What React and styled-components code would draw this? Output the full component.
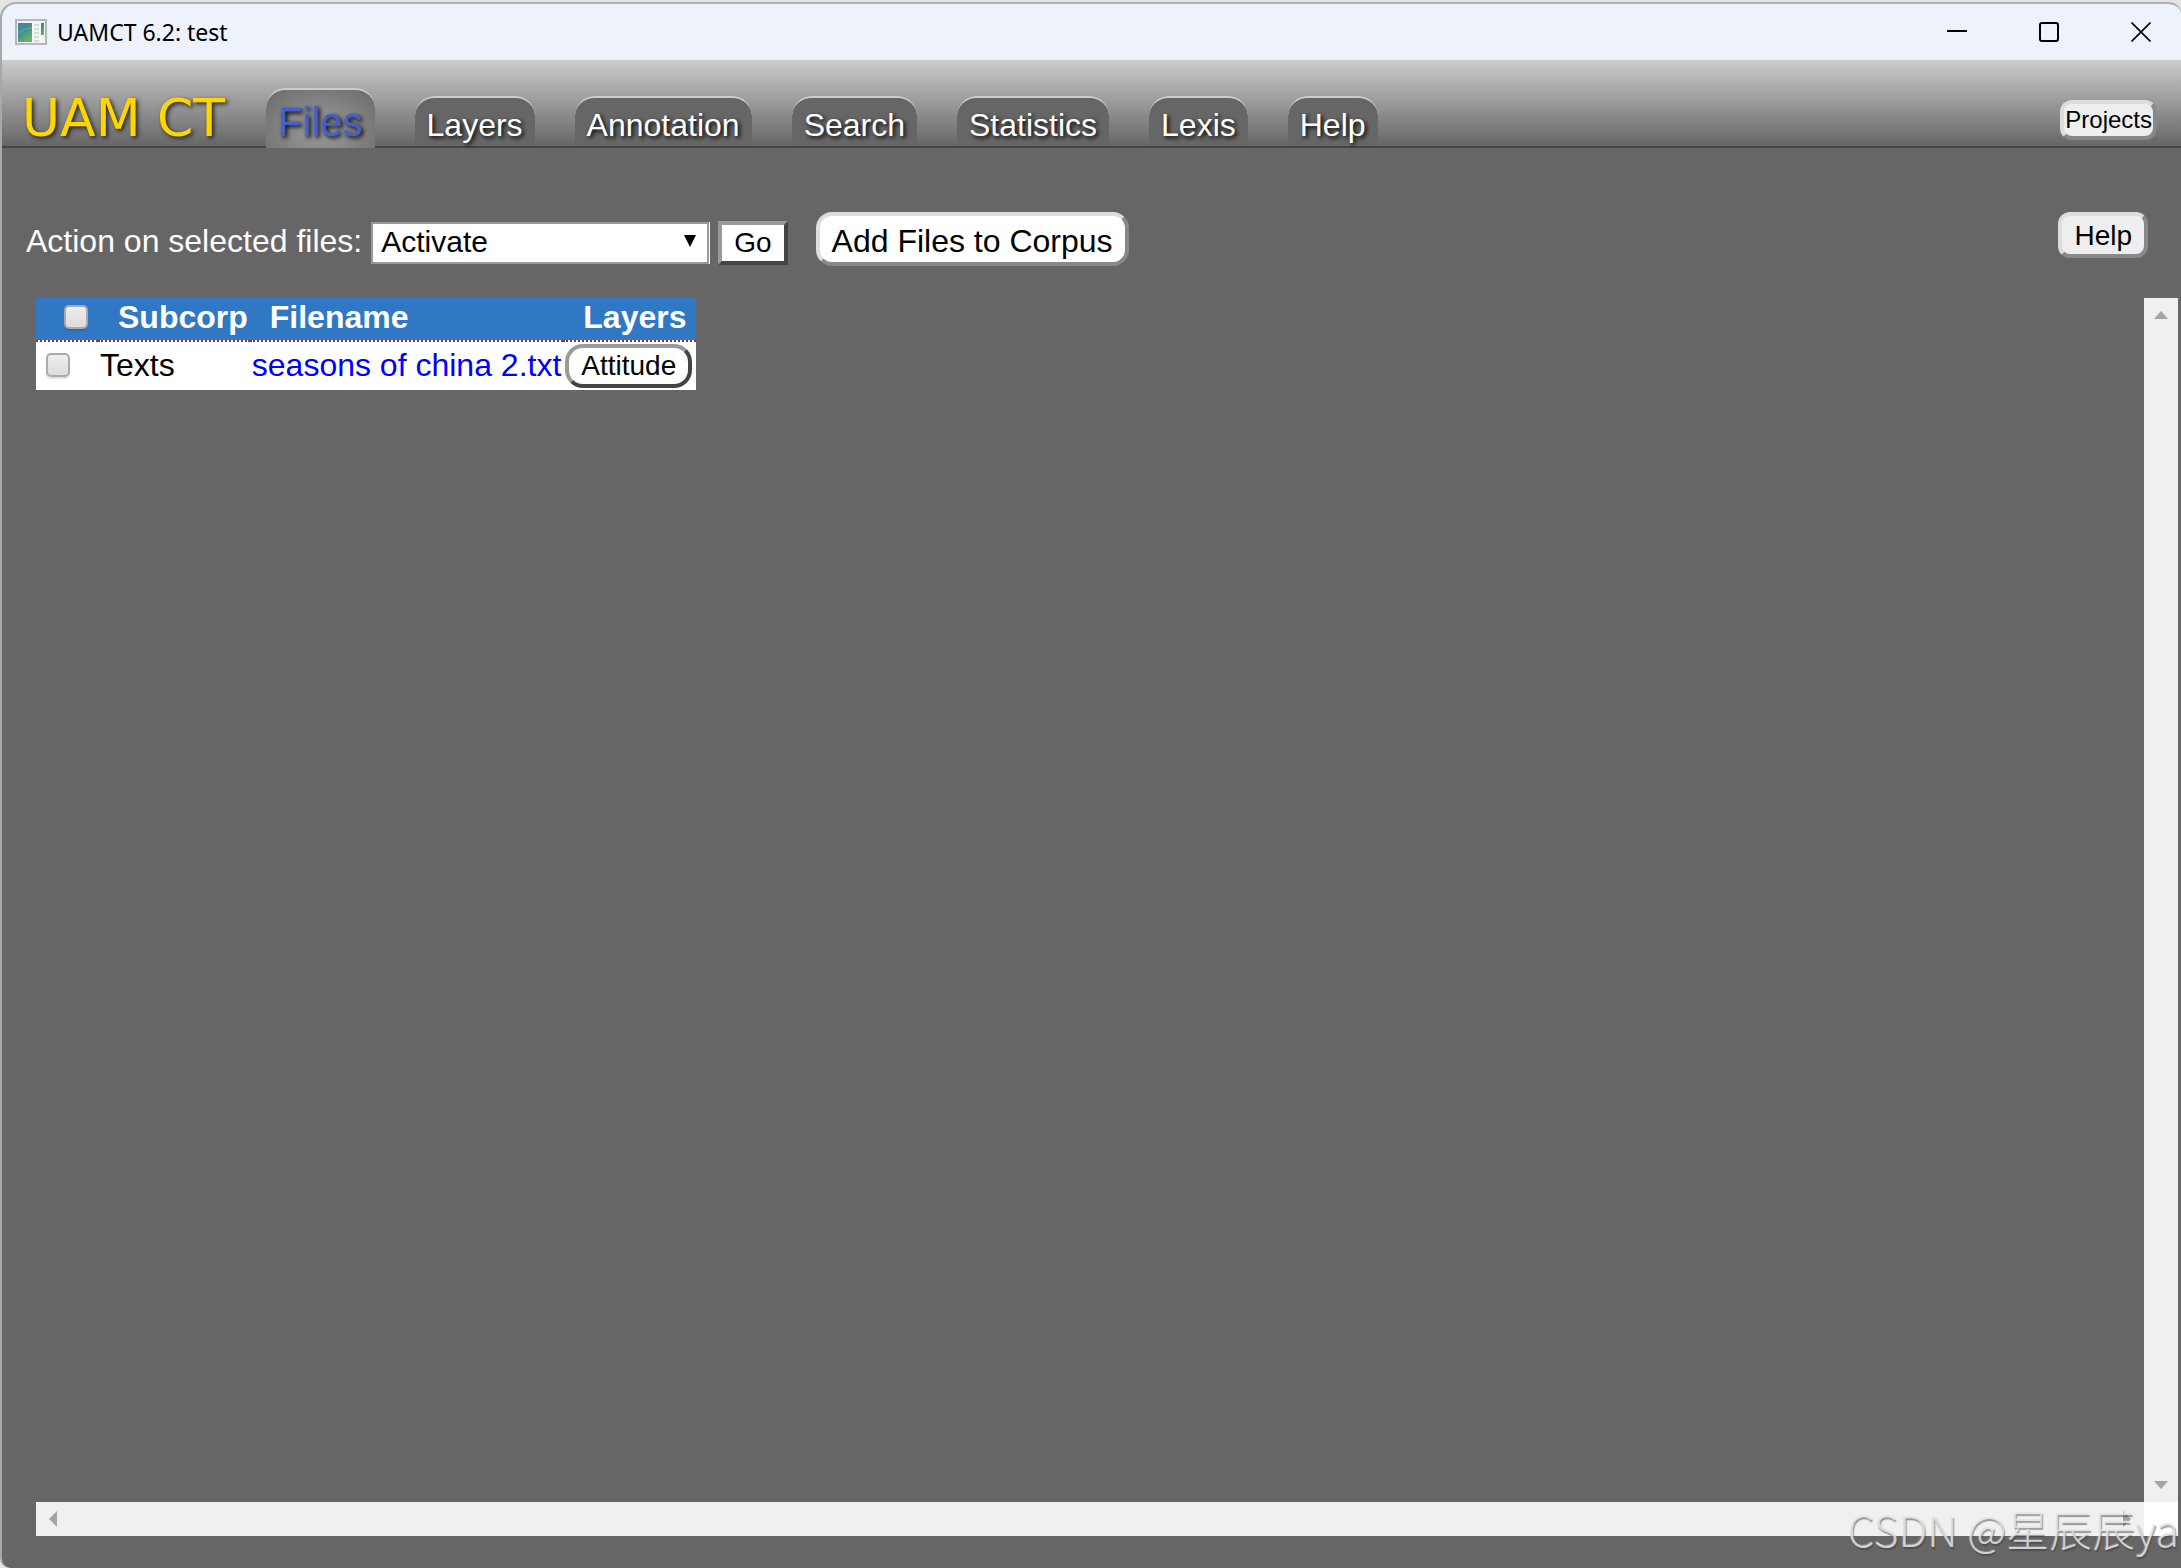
import React, { useState } from 'react';
import styled, { createGlobalStyle } from 'styled-components';

const GlobalStyle = createGlobalStyle`
    *, *::before, *::after {
        box-sizing: border-box;
    }
    body {
        margin: 0;
        padding-top: 2px;
        background: #e4e4e4;
        font-family: "Liberation Sans", Arial, sans-serif;
    }
    button, select, input {
        margin: 0;
        font-family: inherit;
    }
`;

const WindowBlock = styled.div`
    position: relative;
    display: flex;
    flex-direction: column;
    min-height: calc(100vh - 2px);
    overflow: hidden;
    border-top: 2px solid #b0b0b0;
    border-left: 2px solid #a8a8a8;
    border-radius: 16px 12px 0 10px;
    background: #666;
`;

const TitleBar = styled.div`
    display: flex;
    align-items: center;
    height: 56px;
    padding: 0 20px 0 13px;
    background: #eef3fb;

    .title {
        flex: 1;
        margin-left: 10px;
        font-family: "Noto Sans", "Open Sans", sans-serif;
        font-size: 23px;
        line-height: 32px;
        color: #000;
    }
`;

const WindowControls = styled.div`
    display: flex;
    gap: 52px;

    button {
        display: flex;
        align-items: center;
        justify-content: center;
        width: 40px;
        height: 40px;
        padding: 0;
        border: 0;
        background: none;
    }
`;

const Header = styled.header`
    display: flex;
    align-items: flex-end;
    height: 88px;
    padding: 0 24px 0 20px;
    border-bottom: 2px solid #444;
    background: linear-gradient(#ccc, #666);
`;

const Logo = styled.h1`
    margin: 0 41px 0 0;
    font-family: "DejaVu Sans", Verdana, sans-serif;
    font-size: 52px;
    font-weight: 400;
    line-height: 56px;
    white-space: nowrap;
    color: #ffd700;
    text-shadow: 2px 2px 4px #222;
`;

const Nav = styled.nav`
    display: flex;
    flex: 1;
    align-items: flex-end;
    gap: 40px;
`;

const Tab = styled.a`
    padding: 8px 12px 2px;
    border-top: 2px solid #ccc;
    border-radius: 20px 20px 0 0;
    background: #666;
    font-size: 32px;
    line-height: 38px;
    text-decoration: none;
    color: #fff;
    text-shadow: 2px 2px 4px #000;

    ${({ $active }) => $active && `
        margin-bottom: -2px;
        background: radial-gradient(ellipse at 50% 70%, #9c9c9c, #6a6a6a);
        font-size: 40px;
        line-height: 48px;
        color: #4560cc;
    `}
`;

const tones = {
    light: '#ddd #888 #888 #ddd',
    dark: '#999 #444 #444 #999',
};

const Button = styled.button`
    padding: 2px 12px;
    border: 4px solid;
    border-color: ${({ $tone }) => tones[$tone]};
    border-radius: ${({ $radius }) => $radius || 0}px;
    background: #fff;
    font-size: 28px;
    line-height: 32px;
    white-space: nowrap;
    color: #000;
`;

const ProjectsButton = styled(Button)`
    align-self: flex-end;
    margin-bottom: 6px;
    padding: 2px 1px;
    background: #eee;
    font-size: 24px;
    line-height: 28px;
`;

const AddButton = styled(Button)`
    margin-left: 19px;
    padding: 6px 12px 2px;
    font-size: 32px;
    line-height: 38px;
`;

const HelpButton = styled(Button)`
    padding: 4px 12px 2px;
    background: #eee;
`;

const Main = styled.main`
    display: flex;
    flex: 1;
    flex-direction: column;
    padding: 64px 3px 32px 0;
`;

const Toolbar = styled.div`
    display: flex;
    align-items: flex-start;
    justify-content: space-between;
    padding: 0 30px 0 24px;
`;

const ActionForm = styled.form`
    display: flex;
    align-items: baseline;
    gap: 9px;

    label {
        font-size: 32px;
        line-height: 38px;
        white-space: nowrap;
        color: #fff;
    }
`;

const SelectBlock = styled.div`
    display: grid;
    align-items: center;

    select, svg {
        grid-area: 1 / 1;
    }
    select {
        width: 338px;
        height: 42px;
        padding: 0 40px 2px 8px;
        border: 2px solid #999;
        border-radius: 0;
        box-shadow: 1px 0 #fff;
        appearance: none;
        background: #fff;
        font-size: 30px;
        color: #000;
    }
    svg {
        justify-self: end;
        margin: 0 13px 4px 0;
        pointer-events: none;
    }
`;

const ScrollPane = styled.div`
    display: grid;
    flex: 1;
    grid-template-columns: 1fr 34px;
    grid-template-rows: 1fr 34px;
    margin-top: 32px;
    padding-left: 34px;
`;

const ScrollBar = styled.div`
    display: flex;
    flex-direction: ${({ $vertical }) => ($vertical ? 'column' : 'row')};
    justify-content: space-between;
    background: #f0f0f0;

    button {
        display: flex;
        align-items: center;
        justify-content: center;
        width: 34px;
        height: 34px;
        padding: 0;
        border: 0;
        background: none;
    }
`;

const Corner = styled.div`
    background: #fff;
`;

const FileTable = styled.table`
    border-collapse: separate;
    border-spacing: 0;
    background: #fff;
    font-size: 32px;
    line-height: 36px;

    th {
        height: 44px;
        padding: 0 2px 4px 20px;
        border-bottom: 2px dotted #a52a2a;
        background: #3178c4;
        background-clip: padding-box;
        font-weight: 700;
        text-align: left;
        color: #fff;
    }
    th:last-child {
        padding-right: 10px;
    }
    td {
        height: 48px;
        padding: 0 2px 2px;
        color: #000;
    }
    td:last-child {
        padding: 0 2px;
    }
    td a {
        text-decoration: none;
        color: #00f;
    }
    td button {
        display: block;
    }
`;

const CheckBox = styled.input`
    display: block;
    width: 24px;
    height: 24px;
    margin: 0 8px;
    border: 2px solid #aaa;
    border-radius: 5px;
    box-shadow: 0 2px 1px rgba(0, 0, 0, 0.12);
    appearance: none;
    background: linear-gradient(#eee, #dcdcdc);

    &:checked {
        background: #777;
    }
`;

const Watermark = styled.div`
    position: absolute;
    right: 2px;
    bottom: 10px;
    font-family: "Noto Sans CJK SC", sans-serif;
    font-size: 43px;
    font-weight: 300;
    line-height: 60px;
    white-space: nowrap;
    color: rgba(228, 228, 228, 0.85);
    text-shadow: 1px 2px 1px rgba(60, 60, 60, 0.5), -1px -1px 0 rgba(255, 255, 255, 0.2);
    pointer-events: none;
`;

const AppIcon = () => (
    <svg width="32" height="26" viewBox="0 0 32 26" aria-hidden="true">
        <defs>
            <linearGradient id="pane" x1="0" y1="0" x2="0.6" y2="1">
                <stop offset="0" stopColor="#477fa8" />
                <stop offset="0.5" stopColor="#44918d" />
                <stop offset="1" stopColor="#63b56a" />
            </linearGradient>
        </defs>
        <rect x="1" y="1" width="30" height="24" fill="#f4f4f4" stroke="#b4b7bd" strokeWidth="2" />
        <rect x="3" y="4" width="14" height="19" fill="url(#pane)" />
        <path d="M3 15 Q8 9 17 9" fill="none" stroke="#6caaa5" strokeWidth="1" />
        <path d="M19 6h5M19 10h5M19 14h5M19 18h5M19 22h5" stroke="#d6d9d9" strokeWidth="2" />
        <rect x="26" y="4" width="3" height="12" fill="url(#pane)" />
    </svg>
);

const arrows = {
    up: '0,8 7,0 14,8',
    down: '0,0 14,0 7,8',
    left: '8,0 8,16 0,8',
    right: '0,0 8,8 0,16',
};

const ScrollArrow = ({ dir }) => {
    const vertical = dir === 'up' || dir === 'down';

    return (
        <button type="button" aria-label={`Scroll ${dir}`}>
            <svg width={vertical ? 14 : 8} height={vertical ? 8 : 16}>
                <polygon points={arrows[dir]} fill="#a3a3a3" />
            </svg>
        </button>
    );
};

const tabs = ['Files', 'Layers', 'Annotation', 'Search', 'Statistics', 'Lexis', 'Help'];

const files = [
    { subcorp: 'Texts', name: 'seasons of china 2.txt', layer: 'Attitude' },
];

const App = () => {
    const [active, setActive] = useState('Files');
    const [selected, setSelected] = useState([]);

    const toggle = name => setSelected(
        selected.includes(name) ? selected.filter(n => n !== name) : [...selected, name]
    );
    const toggleAll = e => setSelected(e.target.checked ? files.map(f => f.name) : []);

    return (
        <>
            <GlobalStyle />
            <WindowBlock>
                <TitleBar>
                    <AppIcon />
                    <span className="title">UAMCT 6.2: test</span>
                    <WindowControls>
                        <button type="button" aria-label="Minimize">
                            <svg width="20" height="20"><path d="M0 9h20" stroke="#000" strokeWidth="2" /></svg>
                        </button>
                        <button type="button" aria-label="Maximize">
                            <svg width="20" height="20">
                                <rect x="1" y="1" width="18" height="18" rx="2" fill="none" stroke="#000" strokeWidth="2" />
                            </svg>
                        </button>
                        <button type="button" aria-label="Close">
                            <svg width="20" height="20">
                                <path d="M0.5 0.5l19 19M19.5 0.5l-19 19" stroke="#000" strokeWidth="1.7" />
                            </svg>
                        </button>
                    </WindowControls>
                </TitleBar>
                <Header>
                    <Logo>UAM CT</Logo>
                    <Nav>
                        {tabs.map(tab => (
                            <Tab
                                key={tab}
                                href={`#${tab.toLowerCase()}`}
                                $active={tab === active}
                                onClick={() => setActive(tab)}
                            >
                                {tab}
                            </Tab>
                        ))}
                    </Nav>
                    <ProjectsButton type="button" $tone="light" $radius={12}>Projects</ProjectsButton>
                </Header>
                <Main>
                    <Toolbar>
                        <ActionForm onSubmit={e => e.preventDefault()}>
                            <label htmlFor="action">Action on selected files:</label>
                            <SelectBlock>
                                <select id="action" defaultValue="Activate">
                                    <option>Activate</option>
                                    <option>Deactivate</option>
                                </select>
                                <svg width="12" height="12"><polygon points="0,0 12,0 6,12" fill="#000" /></svg>
                            </SelectBlock>
                            <Button type="submit" $tone="dark">Go</Button>
                            <AddButton type="button" $tone="light" $radius={16}>Add Files to Corpus</AddButton>
                        </ActionForm>
                        <HelpButton type="button" $tone="light" $radius={12}>Help</HelpButton>
                    </Toolbar>
                    <ScrollPane>
                        <div>
                            <FileTable>
                                <thead>
                                    <tr>
                                        <th>
                                            <CheckBox
                                                type="checkbox"
                                                aria-label="Select all files"
                                                checked={selected.length === files.length}
                                                onChange={toggleAll}
                                            />
                                        </th>
                                        <th>Subcorp</th>
                                        <th>Filename</th>
                                        <th>Layers</th>
                                    </tr>
                                </thead>
                                <tbody>
                                    {files.map(file => (
                                        <tr key={file.name}>
                                            <td>
                                                <CheckBox
                                                    type="checkbox"
                                                    aria-label={`Select ${file.name}`}
                                                    checked={selected.includes(file.name)}
                                                    onChange={() => toggle(file.name)}
                                                />
                                            </td>
                                            <td>{file.subcorp}</td>
                                            <td><a href="#file">{file.name}</a></td>
                                            <td><Button type="button" $tone="dark" $radius={18}>{file.layer}</Button></td>
                                        </tr>
                                    ))}
                                </tbody>
                            </FileTable>
                        </div>
                        <ScrollBar $vertical>
                            <ScrollArrow dir="up" />
                            <ScrollArrow dir="down" />
                        </ScrollBar>
                        <ScrollBar>
                            <ScrollArrow dir="left" />
                            <ScrollArrow dir="right" />
                        </ScrollBar>
                        <Corner />
                    </ScrollPane>
                </Main>
                <Watermark>CSDN @星辰辰ya</Watermark>
            </WindowBlock>
        </>
    );
};

export default App;
